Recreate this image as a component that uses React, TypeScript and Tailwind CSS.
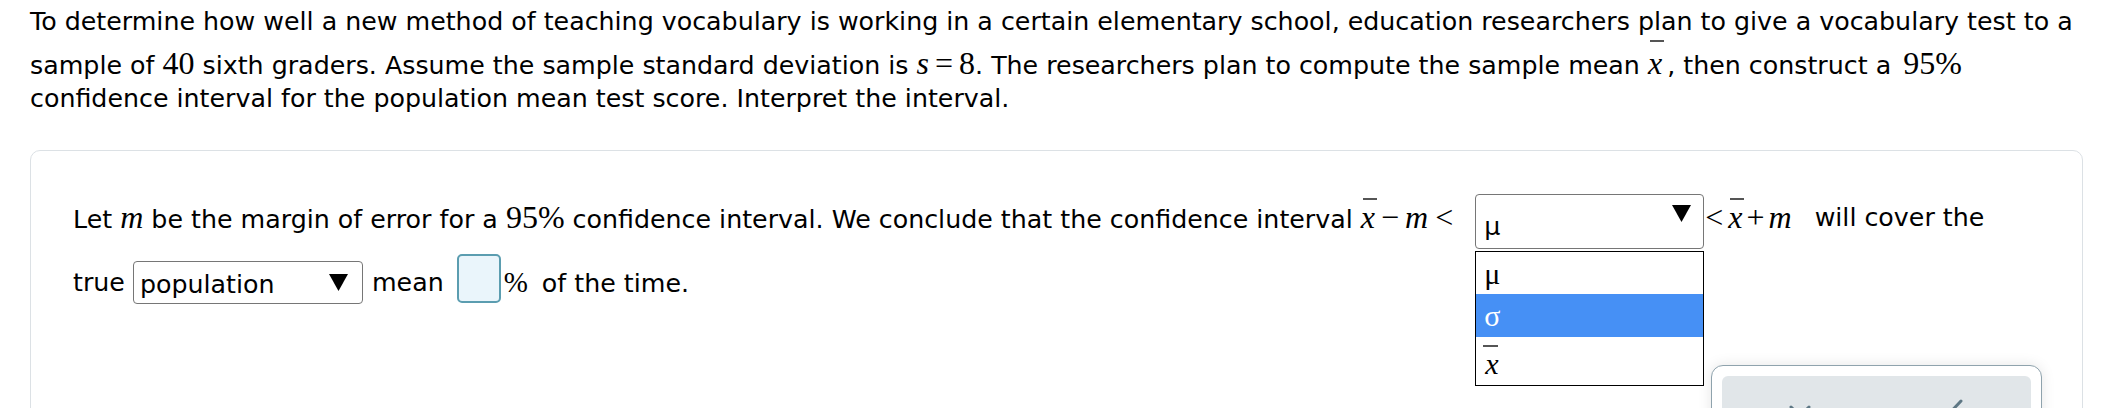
import React from "react";

function Bar({ cls }: { cls: string }) {
  return <span className={cls} />;
}

function Tri() {
  return (
    <svg width="19" height="17" viewBox="0 0 19 17" className="shrink-0">
      <polygon points="0,0 19,0 9.5,17" fill="#000" />
    </svg>
  );
}

export default function App() {
  return (
    <div className="relative w-[2118px] h-[408px] overflow-hidden bg-white text-black font-['DejaVu_Sans',sans-serif] text-[25.3px]">
      {/* Intro paragraph */}
      <div className="pl-[30px] pt-[4px] leading-[35px] whitespace-nowrap">
        <div className="h-[35px]">
          To determine how well a new method of teaching vocabulary is working in a certain elementary school, education researchers plan to give a vocabulary test to a
        </div>
        <div className="h-[42px] pt-[7px]">
          sample of <span className="font-['Liberation_Serif',serif] text-[32px]">40</span> sixth graders. Assume the sample standard deviation is{" "}
          <span className="font-['Liberation_Serif',serif] text-[32px]">
            <span className="italic">s</span>
            <span className="mx-[6px]">=</span>8
          </span>
          . The researchers plan to compute the sample mean{" "}
          <span className="relative font-['Liberation_Serif',serif] text-[32px] italic mr-[5px]">
            x
            <Bar cls="absolute left-[2px] top-[-5px] w-[14px] h-[2px] bg-[#555]" />
          </span>
          , then construct a <span className="ml-[4px] font-['Liberation_Serif',serif] text-[32px]">95%</span>
        </div>
        <div className="h-[35px]">
          confidence interval for the population mean test score. Interpret the interval.
        </div>
      </div>

      {/* Card */}
      <div className="ml-[30px] mt-[34px] w-[2053px] h-[320px] rounded-[10px] border border-[#dce1e5] pl-[42px]">
        {/* Row 1 */}
        <div className="flex items-start mt-[43px] whitespace-nowrap">
          <div className="h-[35px] leading-[35px] mt-[6px]">
            Let <span className="font-['Liberation_Serif',serif] text-[32px] italic">m</span> be the margin of error for a{" "}
            <span className="font-['Liberation_Serif',serif] text-[32px]">95%</span> confidence interval. We conclude that the confidence interval{" "}
            <span className="font-['Liberation_Serif',serif] text-[32px]">
              <span className="relative italic">
                x
                <Bar cls="absolute left-[2px] top-[-1px] w-[14px] h-[2px] bg-[#555]" />
              </span>
              <span className="mx-[6px]">−</span>
              <span className="italic">m</span>
              <span className="ml-[7px]">&lt;</span>
            </span>
          </div>
          <div className="relative ml-[22px] w-[229px] h-[55px] shrink-0 rounded-[4px] border border-[#767676] bg-white flex justify-between items-start pl-[8px] pr-[12px]">
            <span className="leading-[25px] mt-[19px]">μ</span>
            <span className="mt-[10px]">
              <Tri />
            </span>
            {/* open dropdown list */}
            <div className="absolute left-[-1px] top-[56px] w-[229px] h-[135px] border border-black bg-white flex flex-col font-['Liberation_Serif',serif] text-[30px] z-10">
              <div className="h-[42px] flex items-center pl-[8px]">μ</div>
              <div className="h-[43px] flex items-center pl-[8px] bg-[#4690f5] text-white">σ</div>
              <div className="flex-1 flex items-end pl-[9px] pb-[6px]">
                <span className="relative italic leading-[30px]">
                  x
                  <Bar cls="absolute left-[-2px] top-[-4px] w-[15px] h-[2px] bg-[#555]" />
                </span>
              </div>
            </div>
          </div>
          <div className="h-[35px] leading-[35px] mt-[6px] ml-[1px] flex">
            <span className="font-['Liberation_Serif',serif] text-[32px]">
              &lt;
              <span className="relative italic ml-[5px]">
                x
                <Bar cls="absolute left-[2px] top-[-1px] w-[14px] h-[2px] bg-[#555]" />
              </span>
              <span className="mx-[4px]">+</span>
              <span className="italic">m</span>
            </span>
            <span className="ml-[23px]">will cover the</span>
          </div>
        </div>

        {/* Row 2 */}
        <div className="flex items-start mt-[5px] whitespace-nowrap">
          <div className="h-[35px] leading-[35px] mt-[11px]">true</div>
          <div className="ml-[8px] mt-[7px] w-[230px] h-[43px] shrink-0 rounded-[4px] border border-[#767676] bg-white flex items-center justify-between pl-[6px] pr-[14px]">
            <span className="leading-[25px] mt-[3px]">population</span>
            <Tri />
          </div>
          <div className="h-[35px] leading-[35px] mt-[11px] ml-[9px]">mean</div>
          <div className="ml-[13px] w-[44px] h-[49px] shrink-0 rounded-[5px] border-2 border-[#5b9db0] bg-[#eaf5fb]" />
          <div className="h-[35px] leading-[35px] mt-[11px] ml-[3px]">
            <span className="font-['Liberation_Serif',serif] text-[29px]">%</span>
            <span className="ml-[14px]">of the time.</span>
          </div>
        </div>
      </div>

      {/* Floating check toolbar */}
      <div className="absolute left-[1711px] top-[365px] w-[331px] h-[100px] rounded-[12px] border border-[#8fa3ad] bg-white shadow-[0_0_14px_rgba(0,0,0,0.10)] p-[10px]">
        <div className="h-[80px] rounded-[6px] bg-[#e1e6e9] flex items-start pl-[66px] pt-[28px]">
          <svg width="24" height="24" viewBox="0 0 24 24" className="shrink-0">
            <path d="M3 3 L21 21 M21 3 L3 21" stroke="#5e7784" strokeWidth="3" strokeLinecap="round" />
          </svg>
          <svg width="32" height="26" viewBox="0 0 32 26" className="shrink-0 ml-[120px] mt-[-6px]">
            <path d="M3 14 L11 22 L29 3" stroke="#5e7784" strokeWidth="3" fill="none" strokeLinecap="round" strokeLinejoin="round" />
          </svg>
        </div>
      </div>
    </div>
  );
}
